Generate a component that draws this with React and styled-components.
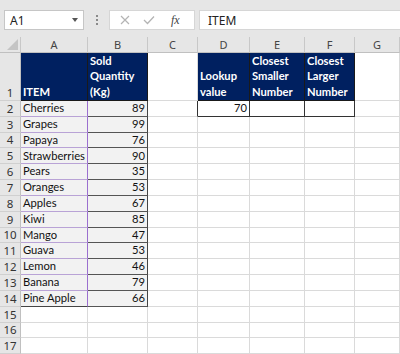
import React from 'react'
import styled, { createGlobalStyle } from 'styled-components'

const Global = createGlobalStyle`
  html, body { margin: 0; padding: 0; background: #ffffff; }
  body { width: 400px; height: 354px; overflow: hidden; }
`

const Window = styled.div`
  width: 400px;
  height: 354px;
  overflow: hidden;
  background: #fff;
  font-family: "Noto Sans", "Liberation Sans", sans-serif;
`

const Toolbar = styled.div`
  height: 37px;
  box-sizing: border-box;
  background: #e6e6e6;
  display: flex;
  align-items: flex-start;
  padding: 10px 0 0 4px;
`

const NameBox = styled.div`
  width: 80px;
  height: 20px;
  box-sizing: border-box;
  background: #fff;
  border: 1px solid #c6c6c6;
  display: flex;
  align-items: center;
  justify-content: space-between;
  padding: 0 5px;
  font-size: 12px;
  color: #222;
`

const Caret = styled.span`
  width: 0;
  height: 0;
  border-left: 3.5px solid transparent;
  border-right: 3.5px solid transparent;
  border-top: 4px solid #555;
`

const Grip = styled.div`
  width: 25px;
  height: 20px;
  display: flex;
  flex-direction: column;
  align-items: center;
  justify-content: center;
  gap: 2px;
  span { width: 2px; height: 2px; background: #8a8a8a; }
`

const FxBox = styled.div`
  width: 86px;
  height: 20px;
  box-sizing: border-box;
  background: #fff;
  border: 1px solid #d6d6d6;
  display: flex;
  align-items: center;
  padding: 0 0 0 10px;
  gap: 13px;
  margin-right: 4px;
`

const FxLabel = styled.span`
  font-family: "Liberation Serif", serif;
  font-style: italic;
  font-size: 12px;
  color: #444;
  margin-left: 3px;
`

const FormulaInput = styled.div`
  flex: 1;
  height: 20px;
  box-sizing: border-box;
  background: #fff;
  border: 1px solid #d6d6d6;
  border-right: none;
  display: flex;
  align-items: center;
  padding-left: 8px;
  font-size: 12px;
  color: #222;
`

const Sheet = styled.div`
  display: grid;
  grid-template-columns: 21px 67px 60px 50px 52px 55px 50px 45px;
  grid-template-rows: 16px 48px;
  grid-auto-rows: 15.83px;
`

const ColHead = styled.div`
  background: #e6e6e6;
  border-right: 1px solid #c8c8c8;
  border-bottom: 1px solid #c0c0c0;
  box-sizing: border-box;
  display: flex;
  align-items: center;
  justify-content: center;
  font-size: 11px;
  color: #444;
  position: relative;
`

const Corner = styled(ColHead)`
  &::after {
    content: "";
    position: absolute;
    right: 2px;
    bottom: 2px;
    border-left: 11px solid transparent;
    border-bottom: 11px solid #c4c4c4;
  }
`

const RowHead = styled.div`
  background: #e6e6e6;
  border-right: 1px solid #c0c0c0;
  border-bottom: 1px solid #d0d0d0;
  box-sizing: border-box;
  display: flex;
  align-items: flex-end;
  justify-content: center;
  font-size: 11.5px;
  line-height: 15px;
  color: #333;
`

const Cell = styled.div`
  box-sizing: border-box;
  background: ${p => p.$bg || '#fff'};
  border-right: 1px solid ${p => p.$rb || '#dadada'};
  border-bottom: 1px solid ${p => p.$bb || '#dadada'};
  display: flex;
  flex-direction: column;
  justify-content: flex-end;
  align-items: ${p => (p.$num ? 'flex-end' : 'flex-start')};
  padding: 0 2px 0 2px;
  font-family: Lato, "Open Sans", sans-serif;
  font-size: 11.2px;
  line-height: 15.8px;
  color: #111;
  white-space: nowrap;
`

const HeadCell = styled(Cell)`
  background: #002060;
  color: #fff;
  font-weight: 700;
  border-right-color: #1a1a1a;
  border-bottom-color: #1a1a1a;
`

const IconX = () => (
  <svg width="10" height="10" viewBox="0 0 10 10">
    <path d="M1 1 L9 9 M9 1 L1 9" stroke="#b4b4b4" strokeWidth="1.2" fill="none" />
  </svg>
)

const IconCheck = () => (
  <svg width="12" height="10" viewBox="0 0 12 10">
    <path d="M1 5 L4.5 8.5 L11 1.5" stroke="#b4b4b4" strokeWidth="1.3" fill="none" />
  </svg>
)

const items = [
  ['Cherries', 89], ['Grapes', 99], ['Papaya', 76], ['Strawberries', 90],
  ['Pears', 35], ['Oranges', 53], ['Apples', 67], ['Kiwi', 85],
  ['Mango', 47], ['Guava', 53], ['Lemon', 46], ['Banana', 79], ['Pine Apple', 66],
]

const cols = ['A', 'B', 'C', 'D', 'E', 'F', 'G']

const App = () => {
  const rows = []
  for (let r = 2; r <= 17; r++) {
    const item = items[r - 2]
    rows.push(<RowHead key={'h' + r}>{r}</RowHead>)
    if (item) {
      const last = r === 14
      rows.push(<Cell key={'a' + r} $bg="#f2f2f2" $rb="#9b6fcf" $bb={last ? '#444' : '#b9a3d6'}>{item[0]}</Cell>)
      rows.push(<Cell key={'b' + r} $bg="#f2f2f2" $rb="#444" $bb="#555" $num>{item[1]}</Cell>)
    } else {
      rows.push(<Cell key={'a' + r} />)
      rows.push(<Cell key={'b' + r} />)
    }
    rows.push(<Cell key={'c' + r} $rb={r === 2 ? '#333' : undefined} />)
    if (r === 2) {
      rows.push(<Cell key={'d' + r} $rb="#333" $bb="#333" $num>70</Cell>)
      rows.push(<Cell key={'e' + r} $rb="#333" $bb="#333" />)
      rows.push(<Cell key={'f' + r} $rb="#333" $bb="#333" />)
    } else {
      rows.push(<Cell key={'d' + r} />)
      rows.push(<Cell key={'e' + r} />)
      rows.push(<Cell key={'f' + r} />)
    }
    rows.push(<Cell key={'g' + r} />)
  }

  return (
    <Window>
      <Global />
      <Toolbar>
        <NameBox>A1<Caret /></NameBox>
        <Grip><span /><span /><span /></Grip>
        <FxBox>
          <IconX />
          <IconCheck />
          <FxLabel>fx</FxLabel>
        </FxBox>
        <FormulaInput>ITEM</FormulaInput>
      </Toolbar>
      <Sheet>
        <Corner />
        {cols.map(c => <ColHead key={c}>{c}</ColHead>)}
        <RowHead>1</RowHead>
        <HeadCell>ITEM</HeadCell>
        <HeadCell><span>Sold</span><span>Quantity</span><span>(Kg)</span></HeadCell>
        <Cell />
        <HeadCell><span>Lookup</span><span>value</span></HeadCell>
        <HeadCell><span>Closest</span><span>Smaller</span><span>Number</span></HeadCell>
        <HeadCell><span>Closest</span><span>Larger</span><span>Number</span></HeadCell>
        <Cell />
        {rows}
      </Sheet>
    </Window>
  )
}

export default App
